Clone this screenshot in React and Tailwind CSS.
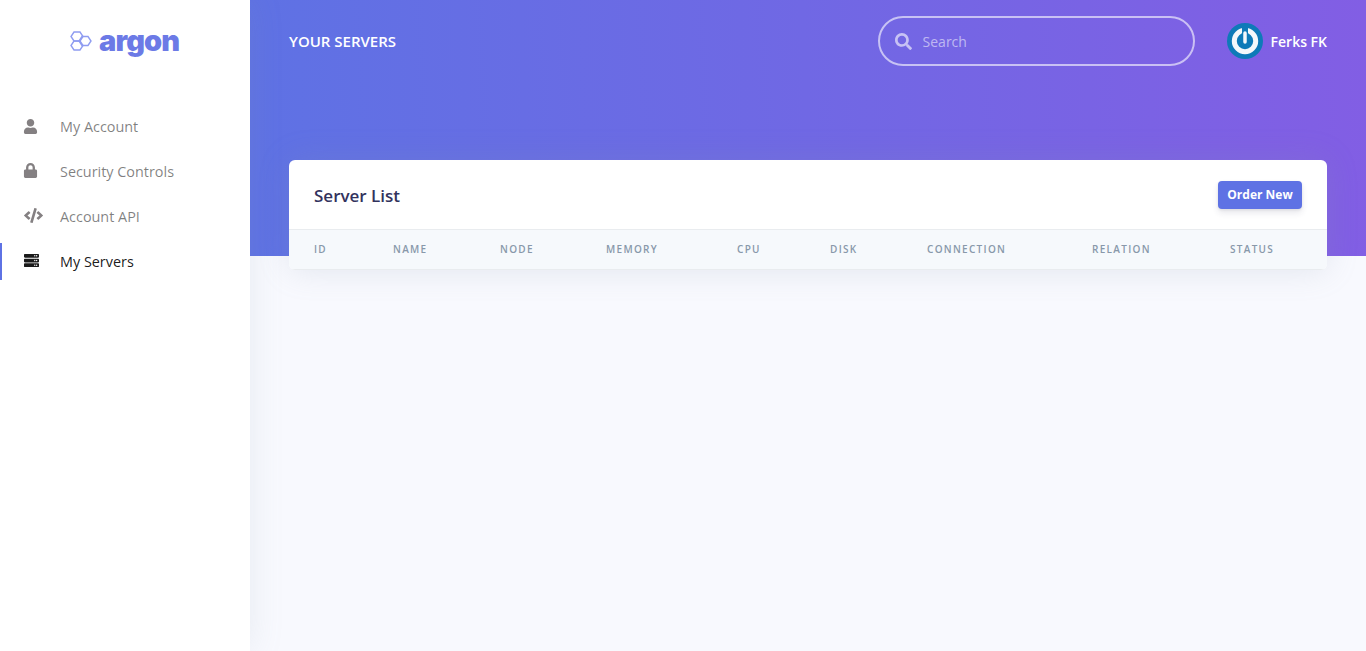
import { FaUser, FaLock, FaCode, FaServer, FaSearch } from "react-icons/fa";

const nav = [
  { label: "My Account", Icon: FaUser, size: 15, icon: "-ml-[1px]" },
  { label: "Security Controls", Icon: FaLock, size: 15, icon: "-ml-[1px]" },
  { label: "Account API", Icon: FaCode, size: 19, icon: "" },
  { label: "My Servers", Icon: FaServer, size: 15, icon: "", active: true },
];

const cols = [
  ["ID", "w-[79px]"],
  ["NAME", "w-[107px]"],
  ["NODE", "w-[106px]"],
  ["MEMORY", "w-[131px]"],
  ["CPU", "w-[93px]"],
  ["DISK", "w-[97px]"],
  ["CONNECTION", "w-[165px]"],
  ["RELATION", "w-[138px]"],
  ["STATUS", "w-[70px]"],
];

function Logo() {
  return (
    <div className="flex h-[104.7px] items-start pt-[23px] pl-[70px]">
      <svg width="22" height="20" viewBox="0 0 22 20" fill="none" stroke="#8f9cf1" strokeWidth="1.4" className="mt-[8px] mr-[7px]">
        <path d="M4 1h6l3 4.5-3 4.5H4L1 5.5z" />
        <path d="M4 10h6l3 4.5-3 4.5H4l-3-4.5z" />
        <path d="M12 5.5h6l3 4.5-3 4.5h-6l-3-4.5z" />
      </svg>
      <span className="font-['Inter',sans-serif] text-[29px] leading-[36px] font-black tracking-[-0.9px] text-[#6c7ae6]">argon</span>
    </div>
  );
}

function Sidebar() {
  return (
    <aside className="z-10 h-full w-[250px] shrink-0 bg-white shadow-[0_0_32px_0_rgba(136,152,170,0.15)]">
      <Logo />
      <nav>
        {nav.map(({ label, Icon, size, icon, active }) => (
          <a
            key={label}
            className={`relative flex h-[44.8px] items-center pl-6 text-[14.4px] ${active ? "text-[rgba(0,0,0,0.9)]" : "text-[rgba(0,0,0,0.5)]"}`}
          >
            {active && <span className="absolute top-1 left-0 h-[37px] w-[2px] bg-[#5e72e4]" />}
            <span className="flex w-9 -translate-y-[1px]">
              <Icon size={size} className={`shrink-0 ${icon} ${active ? "text-[#1a1a1a]" : "text-[#848082]"}`} />
            </span>
            {label}
          </a>
        ))}
      </nav>
    </aside>
  );
}

function Header() {
  return (
    <header className="flex h-[256px] items-start bg-[linear-gradient(87deg,#5e72e4,#825ee4)] px-[39px] pt-4">
      <h1 className="flex h-[50px] items-center text-[15px] font-semibold text-white">YOUR SERVERS</h1>
      <div className="ml-auto flex h-[50px] w-[317px] items-center rounded-[25px] border-2 border-[rgba(255,255,255,0.6)] pl-[15px]">
        <FaSearch size={17} className="text-[rgba(255,255,255,0.6)]" />
        <span className="ml-[11px] text-[14px] text-[rgba(255,255,255,0.55)]">Search</span>
      </div>
      <div className="ml-8 flex h-[50px] items-center gap-2">
        <svg width="36" height="36" viewBox="0 0 36 36">
          <circle cx="18" cy="18" r="18" fill="#0e7ab8" />
          <circle cx="18" cy="18" r="10.7" fill="none" stroke="#f4f8fb" strokeWidth="5" />
          <path d="M18 4v12" stroke="#0e7ab8" strokeWidth="6" />
          <path d="M18 10v9" stroke="#f4f8fb" strokeWidth="3.5" strokeLinecap="round" />
        </svg>
        <span className="text-[14px] font-semibold text-white">Ferks FK</span>
      </div>
    </header>
  );
}

function Card() {
  return (
    <section className="relative mx-[39px] -mt-[96px] overflow-hidden rounded-[6px] bg-white shadow-[0_0_32px_0_rgba(136,152,170,0.2)]">
      <div className="flex h-[70px] items-center justify-between border-b border-[#e9ecef] px-[25px]">
        <h3 className="mt-[3px] text-[17px] font-semibold text-[#32325d]">Server List</h3>
        <button className="mt-[1px] h-[28px] w-[84px] rounded-[4px] bg-[#5e72e4] text-[12px] font-bold text-white shadow-[0_4px_6px_rgba(50,50,93,0.11),0_1px_3px_rgba(0,0,0,0.08)]">
          Order New
        </button>
      </div>
      <div className="flex h-[40px] items-center border-b border-[#e9ecef] bg-[#f6f9fc] px-[25px]">
        {cols.map(([c, w]) => (
          <div key={c} className={`${w} text-[10px] font-semibold tracking-[1.3px] text-[#8898aa]`}>
            {c}
          </div>
        ))}
      </div>
    </section>
  );
}

export default function App() {
  return (
    <div className="flex h-screen w-full overflow-hidden bg-[#f8f9fe] font-['Open_Sans',sans-serif]">
      <Sidebar />
      <main className="min-w-0 flex-1">
        <Header />
        <Card />
      </main>
    </div>
  );
}
